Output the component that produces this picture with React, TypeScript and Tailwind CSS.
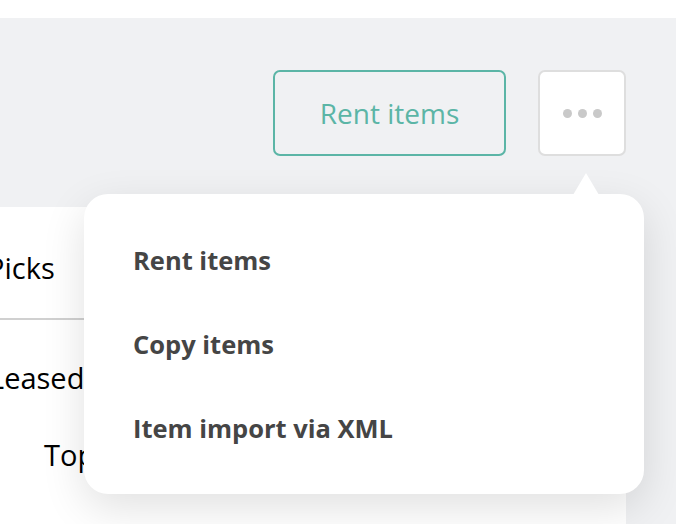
export default function App() {
  const items = ["Rent items", "Copy items", "Item import via XML"]
  return (
    <div className="relative w-[676px] h-[524px] overflow-hidden bg-[#f0f1f3] font-['Open_Sans',sans-serif]">
      <div className="h-[18px] bg-white" />

      <div className="flex justify-end gap-8 pr-[50px] pt-[52px]">
        <button className="w-[233px] h-[86px] rounded-[7px] border-2 border-[#5bb5a6] text-[28px] text-[#5bb5a6]">
          Rent items
        </button>
        <button className="w-[88px] h-[86px] rounded-[7px] border-2 border-[#dedede] bg-white flex items-center justify-center gap-[6px]">
          <span className="w-[9px] h-[9px] rounded-full bg-[#c9c9c9]" />
          <span className="w-[9px] h-[9px] rounded-full bg-[#c9c9c9]" />
          <span className="w-[9px] h-[9px] rounded-full bg-[#c9c9c9]" />
        </button>
      </div>

      <div className="mt-[51px] mr-[50px] h-[400px] overflow-hidden bg-white text-[29px] leading-[36px] text-black">
        <div className="h-[113px] border-b-2 border-[#d0d0d0] pt-[43px]">
          <div className="-ml-[13px]">Picks</div>
        </div>
        <div className="-ml-[11px] pt-[40px]">Leased</div>
        <div className="pl-[44px] pt-[41px]">Top</div>
      </div>

      <div className="absolute left-[84px] top-[194px] w-[560px] h-[300px] rounded-[24px] bg-white shadow-[0_14px_44px_rgba(0,0,0,0.12)] pl-[49px] pt-[49px] flex flex-col gap-[50px]">
        <div className="absolute -top-[21px] left-[489px] w-0 h-0 border-l-[13px] border-r-[13px] border-b-[22px] border-l-transparent border-r-transparent border-b-white" />
        {items.map((t) => (
          <div key={t} className="text-[25.5px] leading-[34px] font-bold text-[#454545]">
            {t}
          </div>
        ))}
      </div>
    </div>
  )
}
